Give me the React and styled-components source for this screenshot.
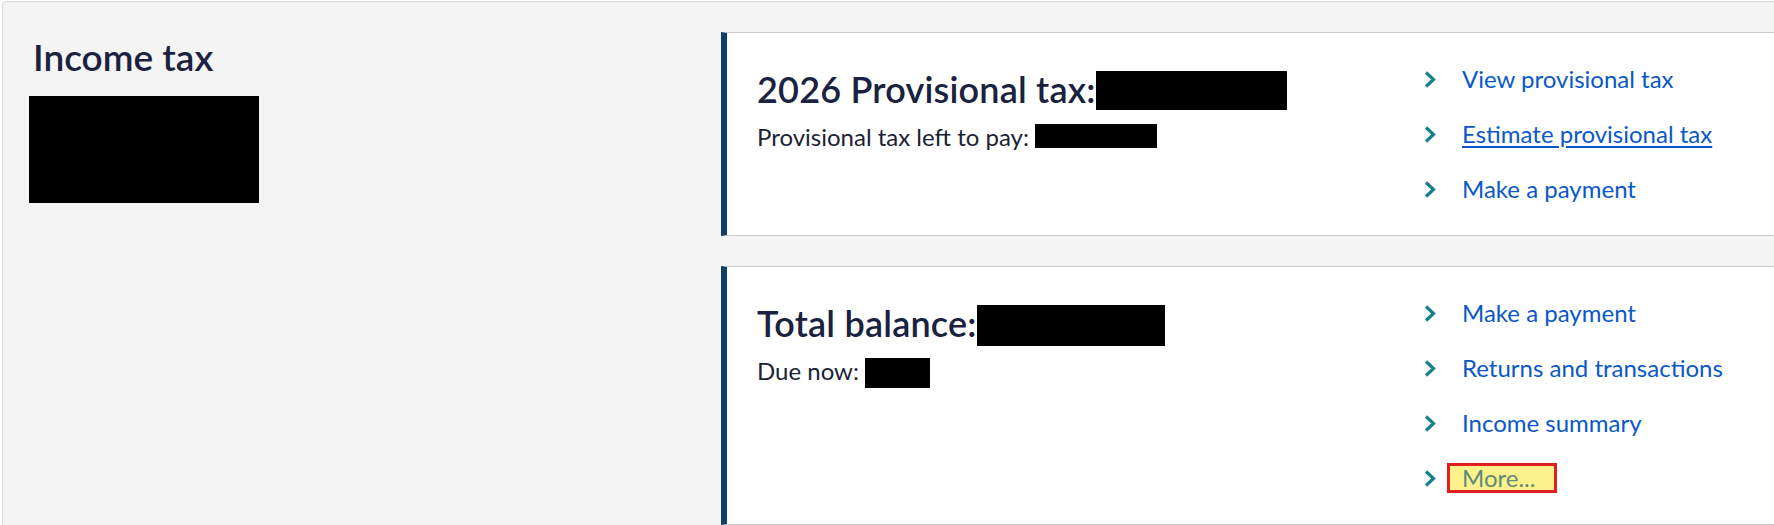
import React from 'react';
import styled, { createGlobalStyle } from 'styled-components';

const GlobalStyle = createGlobalStyle`
  html, body {
    margin: 0;
    padding: 0;
    background: #ffffff;
    overflow: hidden;
  }
  body {
    font-family: Lato, "Noto Sans", sans-serif;
    color: #1b2233;
  }
`;

const provisionalLinks = [
  { label: 'View provisional tax' },
  { label: 'Estimate provisional tax', underline: true },
  { label: 'Make a payment' },
];

const balanceLinks = [
  { label: 'Make a payment' },
  { label: 'Returns and transactions' },
  { label: 'Income summary' },
  { label: 'More...', marked: true },
];

const Chevron = () => (
  <svg width="12" height="17" viewBox="0 0 12 17" aria-hidden="true">
    <polyline points="2,1.5 9.5,8.5 2,15.5" fill="none" stroke="#17808a" strokeWidth="3.2" />
  </svg>
);

const LinkList = ({ links }) => (
  <Links>
    {links.map((l) => (
      <LinkRow key={l.label}>
        <Chevron />
        <LinkText href="#" $underline={l.underline} $marked={l.marked}>
          {l.label}
        </LinkText>
      </LinkRow>
    ))}
  </Links>
);

const App = () => {
  return (
    <>
      <GlobalStyle />
      <Page>
        <Panel>
          <Side>
            <Title>Income tax</Title>
            <Redacted $w={230} $h={107} $block />
          </Side>
          <Cards>
            <Card>
              <CardMain>
                <CardHeading>
                  2026 Provisional tax:<Redacted $w={191} $h={39} $drop={7} />
                </CardHeading>
                <CardSub>
                  Provisional tax left to pay: <Redacted $w={122} $h={24} $drop={2} />
                </CardSub>
              </CardMain>
              <LinkList links={provisionalLinks} />
            </Card>
            <Card>
              <CardMain>
                <CardHeading>
                  Total balance:<Redacted $w={188} $h={41} $drop={9} />
                </CardHeading>
                <CardSub>
                  Due now: <Redacted $w={65} $h={30} $drop={8} />
                </CardSub>
              </CardMain>
              <LinkList links={balanceLinks} />
            </Card>
          </Cards>
        </Panel>
      </Page>
    </>
  );
};

const Page = styled.div`
  width: 100vw;
  height: 100vh;
  overflow: hidden;
`;

const Panel = styled.section`
  display: grid;
  grid-template-columns: 718px 1fr;
  width: 1900px;
  min-height: 600px;
  margin: 1px 0 0 2px;
  background: #f4f4f4;
  border: 1px solid #dcdcdc;
  border-radius: 4px;
`;

const Side = styled.div`
  padding: 33px 0 0 26px;
`;

const Title = styled.h2`
  margin: 0 0 17px 4px;
  font-size: 37px;
  line-height: 1.2;
  font-weight: 600;
  color: #1a2240;
`;

const Redacted = styled.span`
  display: ${(p) => (p.$block ? 'block' : 'inline-block')};
  width: ${(p) => p.$w}px;
  height: ${(p) => p.$h}px;
  background: #000;
  vertical-align: ${(p) => -(p.$drop || 0)}px;
`;

const Cards = styled.div`
  display: flex;
  flex-direction: column;
  gap: 30px;
  padding-top: 30px;
`;

const Card = styled.article`
  display: flex;
  align-items: flex-start;
  background: #fff;
  border: 1px solid #cccccc;
  border-left: 6px solid #104068;
  padding: 28px 0 28px 30px;
`;

const CardMain = styled.div`
  flex: 0 0 667px;
  padding-top: 4px;
`;

const CardHeading = styled.h3`
  margin: 0;
  font-size: 36px;
  line-height: 1.35;
  font-weight: 600;
  letter-spacing: 0.2px;
  color: #1a2240;
`;

const CardSub = styled.p`
  margin: 5px 0 0;
  font-size: 24px;
  line-height: 36px;
  color: #1b2233;
`;

const Links = styled.ul`
  list-style: none;
  margin: 0;
  padding: 0;
  display: flex;
  flex-direction: column;
  gap: 19px;
`;

const LinkRow = styled.li`
  display: flex;
  align-items: center;
  gap: 26px;
  height: 36px;
`;

const LinkText = styled.a`
  font-size: 24px;
  line-height: 36px;
  color: #0a58c8;
  text-decoration: ${(p) => (p.$underline ? 'underline' : 'none')};
  text-underline-offset: 3px;
  ${(p) =>
    p.$marked &&
    `
    display: inline-block;
    line-height: 24px;
    margin-left: -15px;
    padding: 0 19px 0 12px;
    background: #fdf18b;
    border: 3px solid #e11f1f;
    color: #5e8b78;
  `}
`;

export default App;
